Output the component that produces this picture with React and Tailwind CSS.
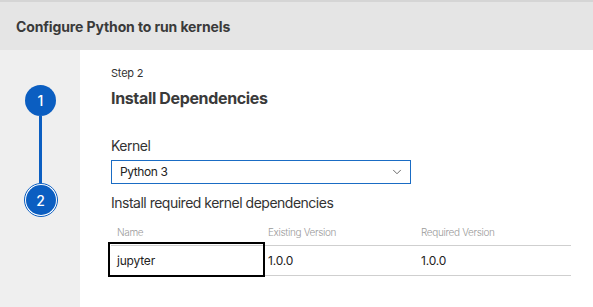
import React from 'react';
import { ChevronDown } from 'lucide-react';

const font = { fontFamily: 'Inter, "Liberation Sans", sans-serif' };

const Stepper = () => {
  return (
    <div className="w-[80px] shrink-0 bg-[#efefef] flex flex-col items-center pt-[35px] pl-[1px]">
      <div className="w-[31px] h-[31px] rounded-full bg-[#0b5ec1] text-white flex items-center justify-center text-[14px] font-medium">
        1
      </div>
      <div className="w-[3px] h-[67px] bg-[#0b5ec1]" />
      <div className="w-[34px] h-[34px] rounded-full border border-[#0b5ec1] bg-white p-[1px]">
        <div className="w-full h-full rounded-full bg-[#0b5ec1] text-white flex items-center justify-center text-[14px] font-medium">
          2
        </div>
      </div>
    </div>
  );
};

const DependencyTable = () => {
  return (
    <div className="mt-[8px] w-[460px]">
      <div className="grid grid-cols-[154px_153px_153px] h-[26px] items-center border-b border-[#cfcfcf] text-[10px] tracking-[-0.35px] text-[#9a9a9a] font-light">
        <span className="pl-[6px]">Name</span>
        <span className="pl-[3px]">Existing Version</span>
        <span className="pl-[3px]">Required Version</span>
      </div>
      <div className="grid grid-cols-[154px_153px_153px] h-[30px] items-center border-b border-[#cfcfcf] text-[12px] tracking-[-0.2px] text-[#222]">
        <div className="relative h-full flex items-center pl-[6px]">
          <span className="absolute left-[-3px] right-0 top-[-4px] bottom-[-2px] border-2 border-black" />
          jupyter
        </div>
        <span className="pl-[3px]">1.0.0</span>
        <span className="pl-[3px]">1.0.0</span>
      </div>
    </div>
  );
};

export default function App() {
  return (
    <div className="w-[593px] h-[307px] flex flex-col bg-white overflow-hidden" style={font}>
      <div className="h-[2px] bg-[#d5d5d5]" />
      <div className="h-[48px] bg-[#e5e5e5] flex items-center pl-[16px]">
        <h1 className="text-[14px] font-bold tracking-[-0.12px] text-[#3a3a3a]">Configure Python to run kernels</h1>
      </div>
      <div className="flex flex-1">
        <Stepper />
        <div className="flex-1 pl-[31px] flex flex-col text-[#333]">
          <div className="mt-[16px] text-[11px] leading-[14px] tracking-[-0.2px] text-[#333]">Step 2</div>
          <div className="mt-[8px] text-[16px] leading-[20px] font-bold tracking-[-0.35px] text-[#3a3a3a]">Install Dependencies</div>
          <div className="mt-[29px] text-[14px] leading-[18px] tracking-[-0.5px]">Kernel</div>
          <div className="mt-[5px] w-[300px] h-[24px] border border-[#1a6cc4] flex items-center justify-between pl-[8px] pr-[6px] text-[12px] tracking-[-0.4px] text-[#222]">
            <span>Python 3</span>
            <ChevronDown className="w-[14px] h-[14px] text-[#555]" strokeWidth={1.5} />
          </div>
          <div className="mt-[10px] text-[14px] leading-[18px] tracking-[-0.5px]">Install required kernel dependencies</div>
          <DependencyTable />
        </div>
      </div>
    </div>
  );
}
